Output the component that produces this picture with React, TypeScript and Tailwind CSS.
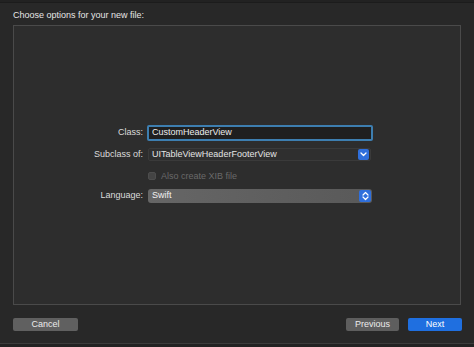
import { useState } from "react";

function Chevron() {
  return (
    <svg width="7" height="5" viewBox="0 0 7 5" fill="none">
      <path d="M1 1l2.5 2.5L6 1" stroke="white" strokeWidth="1.3" strokeLinecap="round" strokeLinejoin="round" />
    </svg>
  );
}

function Stepper() {
  return (
    <svg width="7" height="10" viewBox="0 0 7 10" fill="none">
      <path d="M1 4L3.5 1.5L6 4" stroke="white" strokeWidth="1.2" strokeLinecap="round" strokeLinejoin="round" />
      <path d="M1 6L3.5 8.5L6 6" stroke="white" strokeWidth="1.2" strokeLinecap="round" strokeLinejoin="round" />
    </svg>
  );
}

export default function App() {
  const [className, setClassName] = useState("CustomHeaderView");

  return (
    <div
      className="w-[474px] h-[347px] bg-[#282828] flex flex-col text-[#dcdcdc] overflow-hidden"
      style={{ fontFamily: '"Liberation Sans", Arial, sans-serif' }}
    >
      {/* top strip */}
      <div className="h-[3px] bg-[#222] border-b border-[#1c1c1c] shrink-0" />

      <div className="pl-[13px] pt-[6px] h-[22px] text-[9px] leading-[12px] text-[#e6e6e6]">
        Choose options for your new file:
      </div>

      {/* ================= OPTIONS PANEL ================= */}
      <div className="ml-[13px] w-[448px] h-[280px] border border-[#4a4a4a] bg-[#2d2d2d] shrink-0">
        <div className="pt-[99px] grid grid-cols-[129px_226px] gap-x-[4px] items-center text-[9px]">
          <div className="text-right text-[#dcdcdc]">Class:</div>
          <div className="h-[16px] rounded-[2px] border-2 border-[#3d7eb0] bg-[#1f1f1f] flex items-center px-[3px]">
            <input
              className="w-full bg-transparent outline-none text-[9px] text-[#ececec]"
              value={className}
              onChange={(e) => setClassName(e.target.value)}
            />
          </div>

          <div className="text-right text-[#dcdcdc] mt-[7px]">Subclass of:</div>
          <div className="mt-[7px] h-[13px] w-[223px] ml-[1px] rounded-[2px] bg-[#2f2f2f] border border-[#3a3a3a] flex items-center justify-between pl-[3px] pr-[1px]">
            <span className="text-[#e4e4e4]">UITableViewHeaderFooterView</span>
            <span className="w-[11px] h-[11px] rounded-[2px] bg-[#2f6fdc] flex items-center justify-center">
              <Chevron />
            </span>
          </div>

          <div />
          <div className="mt-[8px] ml-[1px] flex items-center gap-[5px] text-[#6a6a6a]">
            <span className="w-[8px] h-[8px] rounded-[2px] bg-[#444] border border-[#4d4d4d]" />
            <span>Also create XIB file</span>
          </div>

          <div className="text-right text-[#dcdcdc] mt-[6px]">Language:</div>
          <div className="mt-[6px] h-[14px] w-[224px] ml-[1px] rounded-[3px] bg-gradient-to-r from-[#666] to-[#595959] flex items-center justify-between pl-[4px] pr-[1px]">
            <span className="text-[#f2f2f2]">Swift</span>
            <span className="w-[12px] h-[12px] rounded-[2px] bg-[#2f6fdc] flex items-center justify-center">
              <Stepper />
            </span>
          </div>
        </div>
      </div>

      {/* ================= BUTTONS ================= */}
      <div className="flex items-center pl-[13px] pr-[12px] mt-[13px] h-[13px] text-[9px]">
        <button className="w-[65px] h-[13px] rounded-[2px] bg-[#606060] text-[#ececec] leading-[13px]">
          Cancel
        </button>
        <div className="flex-1" />
        <button className="w-[53px] h-[13px] rounded-[2px] bg-[#5e5e5e] text-[#ececec] leading-[13px]">
          Previous
        </button>
        <button className="ml-[9px] w-[54px] h-[13px] rounded-[2px] bg-[#1f6fe0] text-white leading-[13px]">
          Next
        </button>
      </div>

      <div className="mt-[12px] flex-1 border-t border-[#3c3c3c] bg-[#222]" />
    </div>
  );
}
